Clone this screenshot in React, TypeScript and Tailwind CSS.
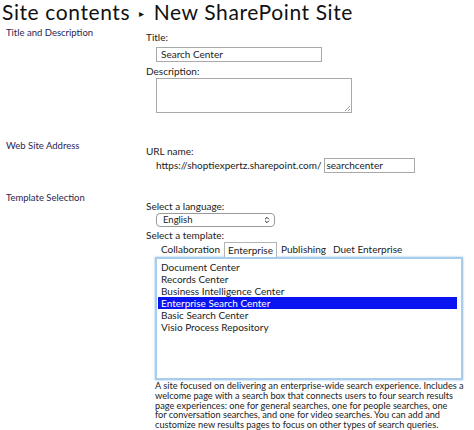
import { ChevronsUpDown } from 'lucide-react';

const TABS = ['Collaboration', 'Enterprise', 'Publishing', 'Duet Enterprise'];

const TEMPLATES = [
  'Document Center',
  'Records Center',
  'Business Intelligence Center',
  'Enterprise Search Center',
  'Basic Search Center',
  'Visio Process Repository',
];

const SELECTED = 3;

const DESCRIPTION = [
  'A site focused on delivering an enterprise-wide search experience. Includes a',
  'welcome page with a search box that connects users to four search results',
  'page experiences: one for general searches, one for people searches, one',
  'for conversation searches, and one for video searches. You can add and',
  'customize new results pages to focus on other types of search queries.',
];

export default function App() {
  return (
    <div className="w-[474px] h-[430px] overflow-hidden bg-white text-[#222] font-['Lato',sans-serif] text-[10px] leading-[11px]">
      {/* Page title */}
      <h1 className="pl-[2px] h-[24px] text-[21px] leading-[24px] tracking-[0.6px] font-normal text-[#111] whitespace-nowrap">
        Site contents <span className="text-[10px] align-[3px] mx-[3px]">▸</span> New SharePoint Site
      </h1>

      {/* Title and Description */}
      <div className="flex mt-[3px]">
        <div className="w-[146px] pl-[6px] text-[#2b2450] text-[9.5px]">Title and Description</div>
        <div className="pt-[5px]">
          <div>Title:</div>
          <div className="ml-[10px] mt-[4px] w-[166px] h-[15px] border border-[#a9a9a9] px-[4px] leading-[13px]">
            Search Center
          </div>
          <div className="mt-[4px]">Description:</div>
          <div className="relative ml-[10px] mt-[1px] w-[196px] h-[35px] border border-[#a9a9a9]">
            <svg className="absolute right-[1px] bottom-[1px]" width="6" height="6" viewBox="0 0 6 6">
              <path d="M6 1 L1 6 M6 4 L4 6" stroke="#888" strokeWidth="0.8" />
            </svg>
          </div>
        </div>
      </div>

      {/* Web Site Address */}
      <div className="flex mt-[27px]">
        <div className="w-[146px] pl-[6px] text-[#2b2450] text-[9.5px]">Web Site Address</div>
        <div className="pt-[6px]">
          <div>URL name:</div>
          <div className="ml-[10px] mt-[1px] flex items-center">
            <span>https://shoptiexpertz.sharepoint.com/</span>
            <div className="ml-[2px] w-[91px] h-[15px] border border-[#a9a9a9] px-[2px] leading-[13px]">searchcenter</div>
          </div>
        </div>
      </div>

      {/* Template Selection */}
      <div className="flex mt-[19px]">
        <div className="w-[146px] pl-[6px] text-[#2b2450] text-[9.5px]">Template Selection</div>
        <div className="pt-[9px]">
          <div>Select a language:</div>
          <div className="ml-[10px] mt-[1px] w-[119px] h-[14px] border border-[#9a9a9a] rounded-[4px] flex items-center justify-between pl-[6px] pr-[3px] text-[9.5px] leading-[12px]">
            <span>English</span>
            <ChevronsUpDown size={8} strokeWidth={3} />
          </div>
          <div className="mt-[3px]">Select a template:</div>
        </div>
      </div>

      <div className="ml-[155px] mt-[1px] w-[308px]">
        <div className="flex items-end h-[15px] pl-[3px] gap-[1px]">
          {TABS.map((t, i) => (
            <div
              key={t}
              className={
                i === 1
                  ? 'px-[3px] h-[15px] border border-b-0 border-[#b5b5b5] bg-white leading-[14px]'
                  : 'px-[3px] h-[13px] leading-[11px]'
              }
            >
              {t}
            </div>
          ))}
        </div>
        <div className="h-[123px] border-2 border-[#a8cdec] shadow-[0_0_2px_#8fbfe8] bg-white pt-[2px] pl-[1px] pr-[4px]">
          {TEMPLATES.map((t, i) => (
            <div
              key={t}
              className={
                i === SELECTED
                  ? 'bg-[#0a14f0] text-white h-[12px] leading-[12px] pl-[3px]'
                  : 'h-[12px] leading-[12px] pl-[3px] text-[#222]'
              }
            >
              {t}
            </div>
          ))}
        </div>
        <p className="mt-[1px] text-[9.2px] leading-[9.8px] text-[#222] whitespace-nowrap">
          {DESCRIPTION.map((line) => (
            <span key={line} className="block">
              {line}
            </span>
          ))}
        </p>
      </div>
    </div>
  );
}
